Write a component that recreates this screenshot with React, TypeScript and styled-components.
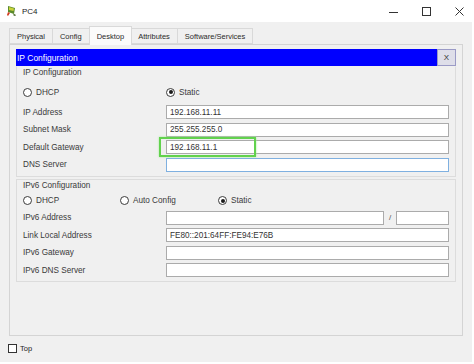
import React, { ReactElement } from "react";
import styled, { createGlobalStyle } from "styled-components";

const GlobalStyle = createGlobalStyle`
  html, body {
    margin: 0;
    padding: 0;
    background: #ffffff;
  }
  body {
    font-family: "Liberation Sans", Arial, sans-serif;
    color: #3a3a3a;
  }
`;

const Page = styled.div`
  width: 474px;
  height: 364px;
  background: #ffffff;
  overflow: hidden;
`;

const TitleBar = styled.div`
  display: flex;
  align-items: center;
  height: 22px;
  padding-left: 6px;
  box-sizing: border-box;
  background: #ffffff;
`;

const TitleText = styled.span`
  margin-left: 5px;
  font-size: 8px;
  color: #222;
`;

const Controls = styled.div`
  display: flex;
  align-items: center;
  gap: 24px;
  margin-left: auto;
  padding-right: 10px;
`;

const Body = styled.div`
  display: flex;
  flex-direction: column;
  width: 472px;
  height: 340px;
  padding: 4px 0 0 9px;
  box-sizing: border-box;
  background: #f0f0f0;
`;

const TabStrip = styled.div`
  display: flex;
  align-items: flex-end;
  height: 18px;
`;

const Tab = styled.div<{ $active?: boolean }>`
  display: flex;
  align-items: center;
  height: ${(p) => (p.$active ? "19px" : "16px")};
  padding: 0 7px;
  margin-bottom: ${(p) => (p.$active ? "-1px" : "0")};
  margin-left: ${(p) => (p.$active ? "-1px" : "0")};
  margin-right: ${(p) => (p.$active ? "-1px" : "0")};
  border: 1px solid #d9d9d9;
  border-bottom: ${(p) => (p.$active ? "none" : "1px solid #d9d9d9")};
  border-left: ${(p) => (p.$active ? "1px solid #d9d9d9" : "none")};
  background: ${(p) => (p.$active ? "#fbfbfb" : "#f0f0f0")};
  box-sizing: border-box;
  font-size: 7.5px;
  color: #2a2a2a;
  position: relative;
  z-index: ${(p) => (p.$active ? 1 : 0)};

  &:first-child {
    border-left: 1px solid #d9d9d9;
  }
`;

const TabPanel = styled.div`
  width: 454px;
  height: 292px;
  padding: 4px 6px 0 6px;
  border: 1px solid #d4d4d4;
  box-sizing: border-box;
  background: #f0f0f0;
`;

const HeaderBar = styled.div`
  display: flex;
  height: 17px;
`;

const HeaderTitle = styled.div`
  flex: 1;
  display: flex;
  align-items: center;
  padding-left: 1px;
  background: #0000ff;
  color: #ffffff;
  font-size: 8.5px;
`;

const CloseButton = styled.div`
  width: 19px;
  display: flex;
  align-items: center;
  justify-content: center;
  border: 1px solid #9a9ac6;
  box-sizing: border-box;
  background: #dedee9;
  color: #333;
  font-size: 8px;
`;

const Group = styled.div<{ $gapTop?: number }>`
  margin-top: ${(p) => p.$gapTop ?? 0}px;
  padding: 0 6px 4px 6px;
  border: 1px solid #dcdcdc;
  border-top-color: ${(p) => (p.$gapTop ? "#dcdcdc" : "transparent")};
`;

const GroupTitle = styled.div`
  height: 11px;
  line-height: 11px;
  font-size: 8.2px;
  color: #3a3a3a;
`;

const RadioRow = styled.div<{ $cols: string; $top: number }>`
  display: grid;
  grid-template-columns: ${(p) => p.$cols};
  align-items: center;
  height: 14px;
  margin-top: ${(p) => p.$top}px;
`;

const RadioItem = styled.div`
  display: flex;
  align-items: center;
  gap: 4px;
  font-size: 8.2px;
`;

const RadioCircle = styled.span<{ $checked?: boolean }>`
  position: relative;
  width: 9px;
  height: 9px;
  border: 1px solid #3c3c3c;
  border-radius: 50%;
  background: #ffffff;
  box-sizing: border-box;

  &::after {
    content: "";
    display: ${(p) => (p.$checked ? "block" : "none")};
    position: absolute;
    left: 1.5px;
    top: 1.5px;
    width: 4px;
    height: 4px;
    border-radius: 50%;
    background: #1a1a1a;
  }
`;

const Fields = styled.div<{ $top: number }>`
  display: grid;
  row-gap: 3.5px;
  margin-top: ${(p) => p.$top}px;
`;

const FieldRow = styled.div`
  display: grid;
  grid-template-columns: 143px 1fr;
  align-items: center;
  height: 14px;
`;

const Label = styled.span`
  font-size: 8.2px;
  color: #3a3a3a;
  white-space: nowrap;
`;

const ValueArea = styled.div`
  position: relative;
  display: flex;
  align-items: center;
  height: 14px;
`;

const Input = styled.input<{ $focused?: boolean; $w?: number }>`
  flex: ${(p) => (p.$w ? `0 0 ${p.$w}px` : "1")};
  min-width: 0;
  height: 14px;
  margin: 0;
  padding: 0 3px;
  border: 1px solid ${(p) => (p.$focused ? "#7fb0e0" : "#ababab")};
  box-sizing: border-box;
  background: #ffffff;
  font-family: "Liberation Sans", Arial, sans-serif;
  font-size: 8.2px;
  color: #333;
  outline: none;
`;

const Slash = styled.span`
  width: 12px;
  text-align: center;
  font-size: 8px;
  color: #555;
`;

const Highlight = styled.div`
  position: absolute;
  left: -7px;
  top: -3.5px;
  width: 97px;
  height: 20px;
  border: 2px solid #62d24e;
  box-sizing: border-box;
  box-shadow: 0 0 2px #a6e89a;
  pointer-events: none;
`;

const Footer = styled.div`
  display: flex;
  align-items: center;
  gap: 3px;
  margin: 8px 0 0 -1px;
  font-size: 7.5px;
  color: #222;
`;

const CheckBox = styled.span`
  width: 9px;
  height: 9px;
  border: 1px solid #333;
  box-sizing: border-box;
  background: #fff;
`;

const PcIcon = (): ReactElement => (
  <svg width="11" height="12" viewBox="0 0 11 12">
    <path d="M2 1 L9 3 L8 9 L2 7 Z" fill="#5b8a2c" />
    <path d="M3 2 L8 3.5 L7.5 6 L3 5 Z" fill="#c9d33a" />
    <path d="M2 7 L4 8 L2 11 L1 10 Z" fill="#d23a1e" />
    <path d="M8 9 L10 10 L9 11 L7 10 Z" fill="#3c5a1a" />
  </svg>
);

const MinIcon = (): ReactElement => (
  <svg width="9" height="9" viewBox="0 0 9 9">
    <line x1="0" y1="5.5" x2="9" y2="5.5" stroke="#333" strokeWidth="1" />
  </svg>
);

const MaxIcon = (): ReactElement => (
  <svg width="9" height="9" viewBox="0 0 9 9">
    <rect x="0.5" y="0.5" width="8" height="8" fill="none" stroke="#333" strokeWidth="1" />
  </svg>
);

const CloseIcon = (): ReactElement => (
  <svg width="9" height="9" viewBox="0 0 9 9">
    <path d="M0.5 0.5 L8.5 8.5 M8.5 0.5 L0.5 8.5" stroke="#333" strokeWidth="1" />
  </svg>
);

const tabs = ["Physical", "Config", "Desktop", "Attributes", "Software/Services"];

const ipRows = [
  { label: "IP Address", value: "192.168.11.11" },
  { label: "Subnet Mask", value: "255.255.255.0" },
  { label: "Default Gateway", value: "192.168.11.1", highlight: true },
  { label: "DNS Server", value: "", focused: true },
];

const ipv6Rows = [
  { label: "Link Local Address", value: "FE80::201:64FF:FE94:E76B" },
  { label: "IPv6 Gateway", value: "" },
  { label: "IPv6 DNS Server", value: "" },
];

const App = (): ReactElement => (
  <Page>
    <GlobalStyle />
    <TitleBar>
      <PcIcon />
      <TitleText>PC4</TitleText>
      <Controls>
        <MinIcon />
        <MaxIcon />
        <CloseIcon />
      </Controls>
    </TitleBar>
    <Body>
      <TabStrip>
        {tabs.map((t) => (
          <Tab key={t} $active={t === "Desktop"}>
            {t}
          </Tab>
        ))}
      </TabStrip>
      <TabPanel>
        <HeaderBar>
          <HeaderTitle>IP Configuration</HeaderTitle>
          <CloseButton>X</CloseButton>
        </HeaderBar>

        <Group>
          <GroupTitle>IP Configuration</GroupTitle>
          <RadioRow $cols="143px 1fr" $top={7}>
            <RadioItem>
              <RadioCircle />
              DHCP
            </RadioItem>
            <RadioItem>
              <RadioCircle $checked />
              Static
            </RadioItem>
          </RadioRow>
          <Fields $top={6}>
            {ipRows.map((r) => (
              <FieldRow key={r.label}>
                <Label>{r.label}</Label>
                <ValueArea>
                  <Input readOnly value={r.value} $focused={r.focused} />
                  {r.highlight && <Highlight />}
                </ValueArea>
              </FieldRow>
            ))}
          </Fields>
        </Group>

        <Group $gapTop={2}>
          <GroupTitle>IPv6 Configuration</GroupTitle>
          <RadioRow $cols="97px 98px 1fr" $top={3}>
            <RadioItem>
              <RadioCircle />
              DHCP
            </RadioItem>
            <RadioItem>
              <RadioCircle />
              Auto Config
            </RadioItem>
            <RadioItem>
              <RadioCircle $checked />
              Static
            </RadioItem>
          </RadioRow>
          <Fields $top={3}>
            <FieldRow>
              <Label>IPv6 Address</Label>
              <ValueArea>
                <Input readOnly value="" />
                <Slash>/</Slash>
                <Input readOnly value="" $w={53} />
              </ValueArea>
            </FieldRow>
            {ipv6Rows.map((r) => (
              <FieldRow key={r.label}>
                <Label>{r.label}</Label>
                <ValueArea>
                  <Input readOnly value={r.value} />
                </ValueArea>
              </FieldRow>
            ))}
          </Fields>
        </Group>
      </TabPanel>
      <Footer>
        <CheckBox />
        Top
      </Footer>
    </Body>
  </Page>
);

export default App;
